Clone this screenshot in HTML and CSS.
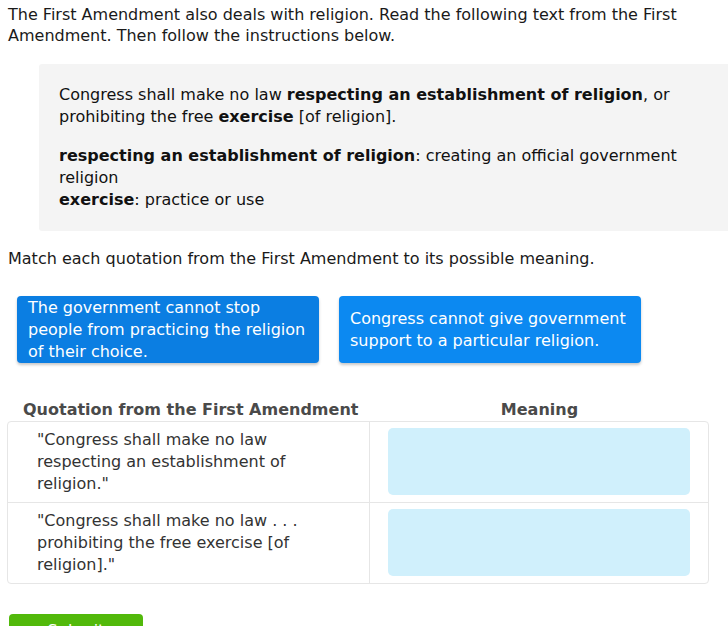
FILE: index.html
```html
<!DOCTYPE html>
<html>
<head>
<meta charset="utf-8">
<link rel="stylesheet" href="styles.css">
</head>
<body>
<div class="page">
  <p class="intro">The First Amendment also deals with religion. Read the following text from the First Amendment. Then follow the instructions below.</p>
  <div class="passage">
    <p>Congress shall make no law <b>respecting an establishment of religion</b>, or prohibiting the free <b>exercise</b> [of religion].</p>
    <p><b>respecting an establishment of religion</b>: creating an official government religion<br><b>exercise</b>: practice or use</p>
  </div>
  <p class="prompt">Match each quotation from the First Amendment to its possible meaning.</p>
  <div class="choices">
    <div class="choice dark">The government cannot stop people from practicing the religion of their choice.</div>
    <div class="choice">Congress cannot give government support to a particular religion.</div>
  </div>
  <div class="match">
    <div class="head">
      <div class="h1">Quotation from the First Amendment</div>
      <div class="h2">Meaning</div>
    </div>
    <div class="grid">
      <div class="row">
        <div class="quote">"Congress shall make no law respecting an establishment of religion."</div>
        <div class="slot"><div class="drop"></div></div>
      </div>
      <div class="row">
        <div class="quote">"Congress shall make no law . . . prohibiting the free exercise [of religion]."</div>
        <div class="slot"><div class="drop"></div></div>
      </div>
    </div>
  </div>
  <button class="submit">Submit</button>
</div>
</body>
</html>
```
FILE: styles.css
```css
html, body {
  margin: 0;
  padding: 0;
  background: #fff;
}
body {
  font-family: "DejaVu Sans", Verdana, sans-serif;
  font-size: 16px;
  color: #1a1a1a;
  overflow: hidden;
}
p { margin: 0; }
.page {
  padding-top: 4px;
}
.intro {
  margin: 0 8px;
  line-height: 21px;
}
.passage {
  margin: 18px 0 0 39px;
  background: #f4f4f4;
  border-radius: 3px 0 0 3px;
  padding: 20px 20px 20px 20px;
  line-height: 22px;
  color: #111;
}
.passage p + p { margin-top: 17px; }
.prompt {
  margin: 17px 8px 0;
  line-height: 22px;
}
.choices {
  display: flex;
  gap: 20px;
  margin: 26px 0 0 17px;
}
.choice {
  width: 302px;
  height: 67px;
  box-sizing: border-box;
  padding: 0 11px;
  display: flex;
  align-items: center;
  background: #0c89f1;
  color: #fff;
  border-radius: 4px;
  line-height: 22px;
  box-shadow: 0 2px 3px rgba(0,0,0,0.22);
}
.choice.dark { background: #0b7ee2; }
.match {
  margin: 36px 19px 0 7px;
}
.head {
  display: grid;
  grid-template-columns: 363px 1fr;
  line-height: 22px;
  font-weight: bold;
  color: #4a4a4a;
}
.h1 { padding-left: 16px; }
.h2 { text-align: center; }
.grid {
  border: 1px solid #e6e6e6;
  border-radius: 4px;
}
.row {
  display: grid;
  grid-template-columns: 362px 1fr;
}
.row + .row { border-top: 1px solid #e6e6e6; }
.quote {
  padding: 7px 30px 0 29px;
  line-height: 22px;
  color: #333;
  border-right: 1px solid #e6e6e6;
}
.slot {
  padding: 6px 18px 7px 18px;
}
.drop {
  height: 67px;
  background: #d0f0fc;
  border-radius: 5px;
}
.submit {
  display: block;
  margin: 30px 0 0 9px;
  width: 134px;
  padding: 6px 0 12px;
  line-height: 22px;
  border: none;
  border-radius: 4px;
  background: #52b90b;
  color: #fff;
  font-family: "DejaVu Sans", Verdana, sans-serif;
  font-size: 16px;
}
```
